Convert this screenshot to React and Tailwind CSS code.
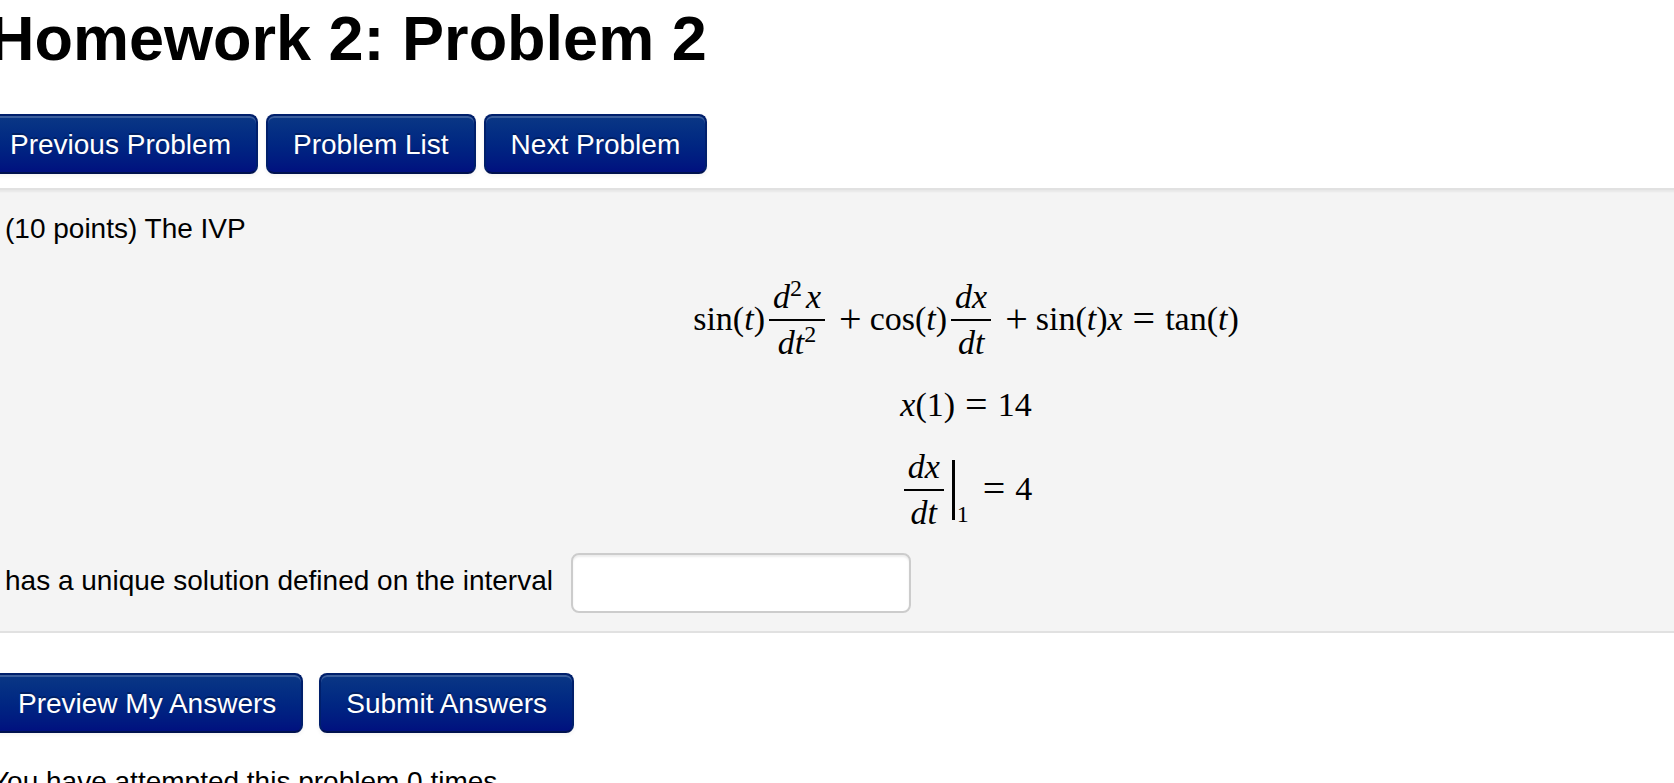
const buttonClass =
  "inline-flex items-center justify-center h-[60px] px-[25px] pt-0.5 rounded-lg border-2 border-[#001f6b] border-b-[#00124f] bg-linear-to-b from-[#0b3785] to-[#00107f] text-white text-[28px] leading-10 whitespace-nowrap [text-shadow:0_-2px_0_rgba(0,0,0,0.25)] shadow-[inset_0_2px_0_rgba(255,255,255,0.2),0_2px_4px_rgba(0,0,0,0.05)]"

const navLinks = [
  { label: "Previous Problem", href: "#previous" },
  { label: "Problem List", href: "#list" },
  { label: "Next Problem", href: "#next" }
]

function Fraction({ top, bottom }) {
  return (
    <span className="inline-flex flex-col items-stretch text-center mx-1">
      <span className="h-[46px] pt-0.5 px-1 border-b-2 border-black">{top}</span>
      <span className="h-11 pt-0.5 px-1">{bottom}</span>
    </span>
  )
}

function Text({ children }) {
  return <span className="pb-0.5">{children}</span>
}

function Plus() {
  return <span className="ml-2.5 mr-2 pb-0.5 text-[40px]">+</span>
}

function Equals() {
  return <span className="mx-2.5 pb-0.5 text-[40px]">=</span>
}

function Power({ children }) {
  return <sup className="text-[24px] not-italic">{children}</sup>
}

function Equations() {
  return (
    <div className="mt-[27px] flex flex-col items-center font-['Liberation_Serif',serif] text-[34px] leading-10">
      <div className="flex items-center h-[90px]">
        <Text>sin(<i>t</i>)</Text>
        <Fraction
          top={<i>d<Power>2</Power><span className="ml-1">x</span></i>}
          bottom={<i>dt<Power>2</Power></i>}
        />
        <Plus />
        <Text>cos(<i>t</i>)</Text>
        <Fraction top={<i>dx</i>} bottom={<i>dt</i>} />
        <Plus />
        <Text>sin(<i>t</i>)<i>x</i></Text>
        <Equals />
        <Text>tan(<i>t</i>)</Text>
      </div>

      <div className="flex items-center h-20 pt-0.5">
        <Text><i>x</i>(1)</Text>
        <Equals />
        <Text>14</Text>
      </div>

      <div className="flex items-center h-[90px]">
        <Fraction top={<i>dx</i>} bottom={<i>dt</i>} />
        <span className="ml-1 mr-1 flex items-end border-l-[3px] border-black h-[60px]">
          <span className="pl-0.5 -mb-3.5 text-[24px]">1</span>
        </span>
        <Equals />
        <Text>4</Text>
      </div>
    </div>
  )
}

function App() {
  return (
    <div className="h-screen overflow-hidden bg-white text-black font-['Liberation_Sans',Arial,sans-serif] text-[28px] leading-10">
      <main className="-ml-[17px] -mr-[253px]">
        <h1 className="pl-1.5 text-[63px] leading-[76px] font-bold">Homework 2: Problem 2</h1>

        <nav className="mt-[38px] flex gap-2">
          {navLinks.map((link) => (
            <a key={link.label} href={link.href} className={buttonClass}>
              {link.label}
            </a>
          ))}
        </nav>

        <form onSubmit={(e) => e.preventDefault()}>
          <section className="mt-[14px] pl-[22px] py-[18px] bg-[#f4f4f4] border-y-2 border-[#e1e1e1] shadow-[inset_0_2px_2px_rgba(0,0,0,0.05)]">
            <p className="pt-px -mb-px">(10 points) The IVP</p>

            <Equations />

            <div className="mt-[18px] flex items-center gap-[18px]">
              <label htmlFor="interval" className="pb-1">
                has a unique solution defined on the interval
              </label>
              <input
                id="interval"
                type="text"
                className="w-[340px] h-[60px] px-3 rounded-lg border-2 border-[#cccccc] bg-white shadow-[inset_0_2px_2px_rgba(0,0,0,0.075)]"
              />
            </div>
          </section>

          <div className="mt-10 pl-2 flex gap-4">
            <button type="button" className={buttonClass}>Preview My Answers</button>
            <button type="submit" className={buttonClass}>Submit Answers</button>
          </div>
        </form>

        <p className="mt-[29px] pl-2">You have attempted this problem 0 times.</p>
      </main>
    </div>
  )
}

export default App
